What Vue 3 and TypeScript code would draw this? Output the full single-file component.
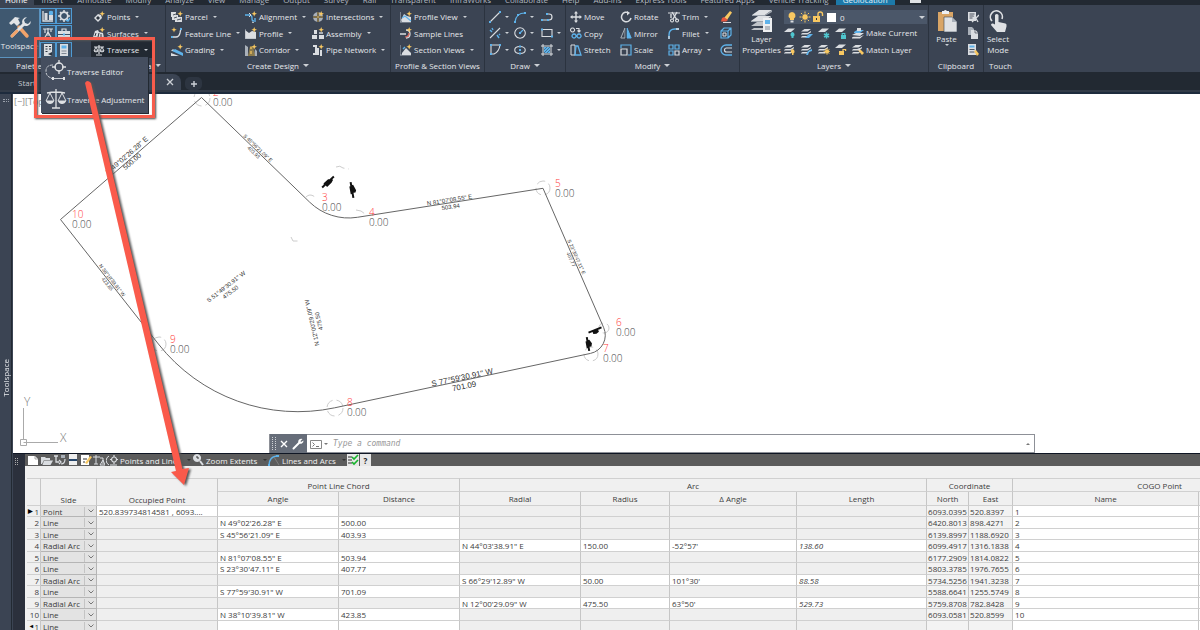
<script setup lang="ts">
import { h, ref } from 'vue'

type Shape = [d: string, fill?: string, stroke?: string, width?: number]

const W = '#dadde1'
const G = '#a9b0b9'
const B = '#5eb2ea'
const Y = '#f8c862'
const K = '#2b3440'
const T = '#4fc6cf'
const spark: Shape = ['M9.2 0l.8 2 2 .8-2 .8-.8 2-.8-2-2-.8 2-.8z', Y]
const sheets: Shape = ['M0 4.500L3.500 2H10L6.500 4.500zM0 7l1.500-1h5L10 4v1.200L6.500 7.500H0zM0 10l1.500-1h5L9 7v1.200L6.500 10.500H0z', W]
const sheet: Shape = ['M0 5L4 1.500h7L7 5z', W]

const icons: Record<string, Shape[]> = {
  points: [['M1 7l4-4 3 1 1 3-4 4z', W], ['M5 5l2 2-2 2-2-2z', K], spark],
  surfaces: [['M0 10l2-6 3-1 1 2 4 1 1 5H1z', W], ['M2 9l1-3M5 10l1-4M8 10V7', 'none', K, 1], spark],
  traverse: [['M1 3h10M6 1v9M3 11h6', 'none', W, 1.2], ['M3 3L1 7h4zM9 3L7 7h4zM1 7q2 2 4 0M7 7q2 2 4 0', 'none', W, 1]],
  parcel: [['M0 1h5v3h2v2h4v5H4V9H1V6H0z', W], ['M2 4l3-1M3 7l3-1M6 9l4-1', 'none', K, .8], spark],
  feature: [['M1 10h4q3 0 4-4l1-5', 'none', W, 1.3], ['M0 9h2v2H0zM9 1h2v2H9z', B], ['M3 0l.7 2 2 .7-2 .7L3 5.500l-.7-2-2-.7 2-.7z', Y]],
  grading: [['M0 7h4l-2-2z', W], ['M1 7l3-2 8 4v3z', B], ['M0 9l8 3H0z', W], spark],
  alignment: [['M0 4h4q3 0 3 3v1q0 2 2 2', 'none', B, 1.3], ['M4 2l2 2-2 2M7 11l2 1', 'none', W, 1], ['M10 7v4', 'none', B, 1.4], spark],
  profile: [['M0 3l4 3 3-2 4 1v7H0z', W], ['M0 2v10h11', 'none', G, 1], spark],
  corridor: [['M0 1l3 2v9H0zM10 5l2 2v5H9z', G], ['M5 2h3l2 10H3z', '#8b7a4b'], ['M6 3v2M6 7v3', 'none', Y, 1.2], spark],
  intersections: [['M6 1a5 5 0 1 0 .1 0z', G], ['M6 1v10M1 6h10', 'none', K, 2], ['M6 1v10M1 6h10', 'none', Y, .8], spark],
  assembly: [['M2 3h3v4H2zM0 8h5v4H0zM7 8h5v4H7z', W], ['M7 5h4v2H7z', G], spark],
  pipe: [['M1 2h3v8H1M6 4v7M9 6v6', 'none', W, 2], spark],
  profileview: [['M0 1v10h11', 'none', G, 1.2], ['M1 9l3-6 3 2 4 1v5H2z', W], ['M2 7l3-2 6 5', 'none', B, 1.2], spark],
  sample: [['M0 7h6M6 3q4 0 4 4t-4 4', 'none', W, 1.3], ['M5 10q4 0 4-4', 'none', '#e26a5f', 1.2], spark],
  sectionview: [['M0 1v10h11', 'none', G, 1], ['M2 9l4-5 5 5v2H2z', W], ['M3 5l2-2', 'none', B, 1.4], spark],
  line: [['M1 11L11 1', 'none', W, 1.1], ['M0 10h2v2H0zM10 0h2v2h-2z', B]],
  arc: [['M1 11Q2 2 11 2', 'none', B, 1.2], ['M0 10h2v2H0zM3 3h2v2H3zM10 1h2v2h-2z', B]],
  polyline: [['M1 9h7q3 0 3-3t-3-3H6', 'none', W, 1.2], ['M0 8h2v2H0zM6 8h2v2H6zM5 2h2v2H5z', B]],
  xline: [['M1 11L11 1', 'none', W, 1.1], ['M1 3l2 2M3 1l1 2M8 8l2 3M10 7l1 1', 'none', B, 1.4]],
  circle: [['M6 .8a5.200 5.200 0 1 0 .1 0z', 'none', W, 1.1], ['M6 6l3-3', 'none', B, 1.2], ['M5 5h2v2H5z', B]],
  rect: [['M1 2.500h10v7H1z', 'none', W, 1.1], ['M0 1.500h2v2H0zM10 8.500h2v2h-2z', B]],
  region: [['M2 1h9q-1 7-6 9H2z', 'none', W, 1.1], ['M1 9h2v2H1zM10 0h2v2h-2zM1 0h2v2H1z', B]],
  ellipse: [['M6 2.500C-1 2.500-1 9.500 6 9.500S13 2.500 6 2.500z', 'none', W, 1.1], ['M5 1.500h2v2H5zM5 5h2v2H5zM5 8.500h2v2H5z', B]],
  hatch: [['M2 0v12M10 0v12M0 2h12M0 10h12', 'none', W, 1], ['M3 3h6v6H3z', B], ['M3 6l3-3M3 9l6-6M6 9l3-3', 'none', K, .5]],
  move: [['M6 0l2 2.500H6.700v2.800h2.800V4L12 6 9.500 8V6.700H6.700v2.800H8L6 12 4 9.500h1.300V6.700H2.500V8L0 6l2.500-2v1.300h2.800V2.500H4z', W]],
  copy: [['M2.500 1a2 2 0 1 0 .1 0z', 'none', W, 1.1], ['M4 7a2 2 0 1 0 .1 0zM9 7a2 2 0 1 0 .1 0z', 'none', B, 1.3], ['M6 1.500h3v3M7.500 3.500L9 5l1.500-1.500', 'none', W, 1.1]],
  stretch: [['M1 1h4v10H1z', 'none', W, 1], ['M5 11h6L8 2H6z', 'none', B, 1.3]],
  rotate: [['M9 2A4.800 4.800 0 1 0 11 7', 'none', W, 1.5], ['M7 0l3 2-3 2.500z', W]],
  mirror: [['M5 1v10H.8z', 'none', G, 1], ['M7 1v10h4.200z', B, B, 1], ['M6 0v12', 'none', K, .8]],
  scale: [['M1 5h6v6H1z', 'none', W, 1.2], ['M1 4V1h10v10H8', 'none', B, 1.2]],
  trim: [['M0 2h12', 'none', W, 1], ['M4 1l5 8M9 1L5 8M3 3v4', 'none', W, 1.4], ['M4 8a1.500 1.500 0 1 0 .1 0zM9 8a1.500 1.500 0 1 0 .1 0z', 'none', W, 1.1]],
  fillet: [['M1 12V8q0-6 6-6h4', 'none', B, 1.4], ['M1 12V9M8 2h3', 'none', W, 1.3]],
  array: [['M1 1h4v4H1zM7 1h4v4H7zM1 7h4v4H1z', 'none', B, 1.2], ['M7 7h4v4H7z', 'none', W, 1.2]],
  erase: [['M4 7L10 0l2 1.500L7 9z', Y], ['M2 7l2-1 4 3-2 1.500H1z', '#e5563e'], ['M3 11.500h8', 'none', W, 1]],
  explode: [['M1 4h7v7H1zM1 4l3-3h7v7L8 11M8 4l3-3', 'none', B, 1.2], ['M3 6h3v3H3z', 'none', W, 1]],
  offset: [['M12 1H6a5 5 0 0 0 0 10h6', 'none', B, 1.3], ['M12 4H6.500a2 2 0 0 0 0 4H12', 'none', W, 1.2]],
  bulb: [['M6 1a3.600 3.600 0 0 0-2 6.500V9h4V7.500A3.600 3.600 0 0 0 6 1z', Y], ['M4.500 9.500h3v2h-3z', W]],
  sun: [['M6 3.200a2.800 2.800 0 1 0 .1 0z', Y], ['M6 .5v2M6 9.500v2M.5 6h2M9.500 6h2M2 2l1.300 1.300M8.700 8.700L10 10M10 2L8.700 3.300M3.300 8.700L2 10', 'none', Y, 1]],
  unlock: [['M1 5h7v6H1z', Y], ['M6 5V3q0-2 2.200-2T10.500 3v2', 'none', Y, 1.4], ['M4 7h1v2H4z', K]],
  layoff: [sheet, ['M8.500 5a2.500 2.500 0 0 1 1 4.500V11H7.500V9.500A2.500 2.500 0 0 1 8.500 5z', T]],
  layiso: [sheets, ['M4 11l4-4h4l-4 4z', B]],
  layfrz: [sheet, ['M8.500 5.500v6M6 7l5 3M11 7l-5 3', 'none', T, 1.5]],
  laylock: [sheet, ['M6 8h5v4H6z', T], ['M7.200 8V6.500h2.600V8', 'none', T, 1.1]],
  laycur: [['M0 8l4-2h8l-4 3zM0 10.500l1.500-.7H8L12 8l-4 3.500H0z', W], ['M2 5l3-2h7L8 6H2z', B], ['M5 1h4v3H5z', W]],
  layon: [sheets, ['M8.500 6a2.500 2.500 0 0 1 1 4.500V12H8v-1.500A2.500 2.500 0 0 1 8.500 6z', Y]],
  layuniso: [sheets, ['M5 12l2-4 4-2v2l-3 1-1 3z', B]],
  laythw: [sheets, ['M9 6.500a2 2 0 1 0 .1 0z', Y], ['M9 5v7M5.500 8.500h7M6.500 6l5 5M11.500 6l-5 5', 'none', Y, .7]],
  layunlk: [sheet, ['M4 8h5v4H4z', Y], ['M8 8V6.500h2.600V8', 'none', Y, 1.2]],
  laymatch: [sheets, ['M6 7l2-1 4 4-2 2z', Y], ['M5 6l3-1v3z', W]],
  cut: [['M1 1h8v9H1z', W], ['M2.500 3h5M2.500 5h5M2.500 7h3', 'none', K, .8], ['M5 11l7-7M7 4l4 7', 'none', W, 1.3]],
  copyclip: [['M1 0h4l2 2v6H1z', G], ['M4 3h4.500L11 5.500V12H4z', W], ['M8 3v3h3', 'none', K, .6]],
  listprop: [['M1 0h8v11H1z', W], ['M2.500 1.500h5v2h-5z', B], ['M2.500 5.500h5M2.500 8h5', 'none', K, .8], ['M7 7l2-1 3 4-2 2z', Y]],
  palette: [['M1 1v10h10', 'none', W, 1.3], ['M2.500 3h3v7h-3z', W], ['M7 5h4v5H7z', W], ['M7 1.500q2-1.500 4 0v3q-2 1-4 0z', B]],
  gear: [['M6 2.200a3.800 3.800 0 1 0 .1 0z', 'none', W, 1.8], ['M6 0v2M6 10v2M0 6h2M10 6h2M2 2l1 1M9 9l1 1M10 2L9 3M3 9l-1 1', 'none', W, 1.5], ['M8 10l2 1 2-3', 'none', B, 1.4]],
  survey: [['M1 2h10M3 2v4M9 2v3M6 1v4M6 5l-4 7M6 5l4 7M4 8h4', 'none', W, 1.2]],
  toolbox: [['M0 4h12v3H0zM0 8h12v3H0z', W], ['M4 4V2h4v2', 'none', W, 1.2], ['M5 6.500h2v2H5z', B]],
  form: [['M2 0h8v12H2z', W], ['M3.500 2.500h2M7 2.500h2M3.500 5h2M7 5h2M3.500 7.500h2', 'none', K, 1.2], ['M6 10l4-2v4z', K]],
  calc: [['M2 0h8v12H2z', W], ['M3.500 1.500h5v3h-5z', B], ['M3.500 7h5M3.500 9.500h5', 'none', '#7f8894', 1]],
  newdoc: [['M0 2h7l3 3v6H0z', '#fff'], ['M7 2v3h3', 'none', '#888', .7]],
  open: [['M0 3h4l1 1h4v2H3l-2 4H0z', W], ['M3 6.500h9L9.500 11H1.500z', W]],
  tree: [['M0 2h4M2 2v6h3M5 6l2 2-2 2', 'none', W, 1.3], ['M7 1h4v3H7z', G], ['M7 10q4 0 4-5', 'none', W, 1.2]],
  save: [['M2 0h8v5H2zM2 7h8v4H2z', '#eee'], ['M2 5h8v2H2z', '#26466b']],
  edit: [['M1 1h8v10H1z', '#fff'], ['M3 5h4M3 8h2', 'none', '#333', 1], ['M5 9l5-7 2 1-5 7z', Y]],
  scaleicon: [['M0 3h7M3 1v9M1 10h4M7 4h3v6M10 6l2 5H7z', 'none', W, 1]],
  trav: [['M3 11A5 5 0 0 1 3 2M4 11h7', 'none', W, 1], ['M8 3a2.500 2.500 0 1 0 .1 0zM8 1v2M8 8v2M4 5.500h2M10 5.500h2', 'none', W, 1.2]],
  zoomext: [['M5 0a4 4 0 1 0 .1 0z', W], ['M5 2v2h2', 'none', '#333', 1], ['M8 7l3 4', 'none', W, 2]],
  arcs: [['M1 12Q1 2 10 2', 'none', B, 1.3], ['M0 10h2v2H0zM8 1h3v2H8z', B], ['M6 3l5 8', 'none', '#888', .8]],
  check: [['M0 0h12v12H0z', '#e7e7e7'], ['M1 3h4M1 6h4M1 9h4', 'none', '#333', 1.2], ['M5 3l2 2 4-4M5 8l2 2 4-4', 'none', '#16b42b', 1.6]],
}

const Icon = (p: { name: string }) =>
  h('svg', { viewBox: '0 0 12 12', width: 12, height: 12, 'aria-hidden': 'true' },
    icons[p.name].map(([d, fill = 'none', stroke = 'none', width = 1]) =>
      h('path', { d, fill, stroke, 'stroke-width': width })))
Icon.props = ['name']

const tabs = ['Home', 'Insert', 'Annotate', 'Modify', 'Analyze', 'View', 'Manage', 'Output', 'Survey', 'Rail', 'Transparent',
  'InfraWorks', 'Collaborate', 'Help', 'Add-ins', 'Express Tools', 'Featured Apps', 'Vehicle Tracking', 'Geolocation']

interface Tool { icon: string; label: string; drop?: boolean }
const t = (icon: string, label: string, drop = true): Tool => ({ icon, label, drop })

const paletteTools = ['palette', 'gear', 'survey', 'toolbox', 'form', 'calc']
const ground = [t('points', 'Points'), t('surfaces', 'Surfaces'), t('traverse', 'Traverse')]
const design = [
  t('parcel', 'Parcel'), t('alignment', 'Alignment'), t('intersections', 'Intersections'),
  t('feature', 'Feature Line'), t('profile', 'Profile'), t('assembly', 'Assembly'),
  t('grading', 'Grading'), t('corridor', 'Corridor'), t('pipe', 'Pipe Network'),
]
const views = [t('profileview', 'Profile View'), t('sample', 'Sample Lines', false), t('sectionview', 'Section Views')]
const draw = [
  t('line', 'Line'), t('arc', 'Arc'), t('polyline', 'Polyline', false),
  t('xline', 'Construction'), t('circle', 'Circle'), t('rect', 'Rectangle'),
  t('region', 'Region'), t('ellipse', 'Ellipse'), t('hatch', 'Hatch'),
]
const modify = [
  t('move', 'Move', false), t('rotate', 'Rotate', false), t('trim', 'Trim'), t('erase', '', false),
  t('copy', 'Copy', false), t('mirror', 'Mirror', false), t('fillet', 'Fillet'), t('explode', '', false),
  t('stretch', 'Stretch', false), t('scale', 'Scale', false), t('array', 'Array'), t('offset', '', false),
]
const layerTools = ['layoff', 'layiso', 'layfrz', 'laylock', 'laycur', 'layon', 'layuniso', 'laythw', 'layunlk', 'laymatch']
const layerLabels: Record<string, string> = { laycur: 'Make Current', laymatch: 'Match Layer' }

interface PointMark { n: string; x: number; y: number }
const marks: PointMark[] = [
  { n: '2', x: 213, y: 96 }, { n: '3', x: 322, y: 201 }, { n: '4', x: 369, y: 216 },
  { n: '5', x: 555, y: 187 }, { n: '6', x: 616, y: 326 }, { n: '7', x: 603, y: 352 },
  { n: '8', x: 347, y: 406 }, { n: '9', x: 170, y: 343 }, { n: '10', x: 72, y: 218 },
]
interface Course { x: number; y: number; a: number; s: number; bearing: string; length: string }
const courses: Course[] = [
  { x: 129, y: 158, a: -41, s: 7, bearing: 'N 49°02\'26.28" E', length: '500.00' },
  { x: 256, y: 150, a: 44, s: 5, bearing: 'S 45°56\'21.09" E', length: '403.93' },
  { x: 450, y: 203, a: -9, s: 6, bearing: 'N 81°07\'08.55" E', length: '503.94' },
  { x: 574, y: 258, a: 66, s: 5, bearing: 'S 23°30\'47.11" E', length: '407.77' },
  { x: 463, y: 381, a: -12, s: 8, bearing: 'S 77°59\'30.91" W', length: '701.09' },
  { x: 110, y: 282, a: 52, s: 5, bearing: 'N 38°10\'39.81" W', length: '423.85' },
  { x: 228, y: 289, a: -38, s: 6, bearing: 'S 51°49\'30.91" W', length: '475.50' },
  { x: 315, y: 322, a: -103, s: 6, bearing: 'N 12°00\'29.09" W', length: '475.50' },
]

interface Row {
  side: string; occupied?: string; angle?: string; distance?: string
  radial?: string; radius?: string; delta?: string; length?: string
  north?: string; east?: string; name?: string
}
const line = (angle: string, distance: string, north: string, east: string, name: string): Row =>
  ({ side: 'Line', angle, distance, north, east, name })
const arc = (radial: string, radius: string, delta: string, length: string, north: string, east: string, name: string): Row =>
  ({ side: 'Radial Arc', radial, radius, delta, length, north, east, name })
const rows = ref<Row[]>([
  { side: 'Point', occupied: '520.839734814581 , 6093....', angle: '', north: '6093.0395', east: '520.8397', name: '1' },
  line('N 49°02\'26.28" E', '500.00', '6420.8013', '898.4271', '2'),
  line('S 45°56\'21.09" E', '403.93', '6139.8997', '1188.6920', '3'),
  arc('N 44°03\'38.91" E', '150.00', '-52°57\'', '138.60', '6099.4917', '1316.1838', '4'),
  line('N 81°07\'08.55" E', '503.94', '6177.2909', '1814.0822', '5'),
  line('S 23°30\'47.11" E', '407.77', '5803.3785', '1976.7655', '6'),
  arc('S 66°29\'12.89" W', '50.00', '101°30\'', '88.58', '5734.5256', '1941.3238', '7'),
  line('S 77°59\'30.91" W', '701.09', '5588.6641', '1255.5749', '8'),
  arc('N 12°00\'29.09" W', '475.50', '63°50\'', '529.73', '5759.8708', '782.8428', '9'),
  line('N 38°10\'39.81" W', '423.85', '6093.0581', '520.8599', '10'),
  { side: 'Line', angle: '', distance: '' },
])
const fields = ['occupied', 'angle', 'distance', 'radial', 'radius', 'delta', 'length'] as const
const rowMark = (i: number) => (i === 0 ? '▶' : i === 10 ? '◂' : '')
const rowNumber = (i: number) => (i === 10 ? '1' : String(i + 1))
const command = ref('')
const editTools = ['newdoc', 'open', 'tree', 'save', 'edit', 'scaleicon', 'trav']
</script>

<template>
  <div class="app">
    <nav class="tabs">
      <a v-for="name in tabs" :key="name" href="#" :class="{ home: name === 'Home', geo: name === 'Geolocation' }">{{ name }}</a>
      <span class="tab-box"></span>
    </nav>

    <div class="ribbon">
      <section class="panel p-palettes">
        <div class="palettes">
          <button class="toolspace">
            <svg viewBox="0 0 24 24" width="24" height="24" aria-hidden="true">
              <path d="M11 12l8 9" stroke="#f1a36a" stroke-width="3.500" stroke-linecap="round" />
              <path d="M1 8l6-6 5 1-2 1 2 4-3 3-3-3-3 2z" fill="#e2e4e7" />
              <path d="M4 21L16 9" stroke="#e2e4e7" stroke-width="3" stroke-linecap="round" />
              <path d="M4 21l5-5" stroke="#f1a36a" stroke-width="3" stroke-linecap="round" />
              <path d="M19 2a5 5 0 0 0-4 8 5 5 0 0 0 8-4l-3 3-3-1-1-3z" fill="#e2e4e7" />
            </svg>
            <span>Toolspace</span>
          </button>
          <button v-for="name in paletteTools" :key="name" class="pal" :aria-label="name"><Icon :name="name" /></button>
        </div>
        <button class="title">Palettes <i class="caret wide"></i></button>
      </section>

      <section class="panel p-ground">
        <div class="tools one">
          <button v-for="x in ground" :key="x.label" class="tool" :class="{ open: x.label === 'Traverse' }">
            <Icon :name="x.icon" /><span>{{ x.label }}</span><i class="caret"></i>
          </button>
        </div>
        <button class="title">Create Ground Data <i class="caret wide"></i></button>
      </section>

      <section class="panel p-design">
        <div class="tools">
          <button v-for="x in design" :key="x.label" class="tool">
            <Icon :name="x.icon" /><span>{{ x.label }}</span><i class="caret"></i>
          </button>
        </div>
        <button class="title">Create Design <i class="caret wide"></i></button>
      </section>

      <section class="panel p-views">
        <div class="tools one">
          <button v-for="x in views" :key="x.label" class="tool">
            <Icon :name="x.icon" /><span>{{ x.label }}</span><i v-if="x.drop" class="caret"></i>
          </button>
        </div>
        <div class="title">Profile &amp; Section Views</div>
      </section>

      <section class="panel p-draw">
        <div class="tools">
          <button v-for="x in draw" :key="x.label" class="tool" :aria-label="x.label">
            <Icon :name="x.icon" /><i v-if="x.drop" class="caret"></i>
          </button>
        </div>
        <button class="title">Draw <i class="caret wide"></i></button>
      </section>

      <section class="panel p-modify">
        <div class="tools">
          <button v-for="x in modify" :key="x.icon" class="tool" :aria-label="x.label || x.icon">
            <Icon :name="x.icon" /><span v-if="x.label">{{ x.label }}</span><i v-if="x.drop" class="caret"></i>
          </button>
        </div>
        <button class="title">Modify <i class="caret wide"></i></button>
      </section>

      <section class="panel p-layers">
        <div class="layers">
          <button class="big">
            <svg viewBox="0 0 24 24" width="24" height="24" aria-hidden="true">
              <path d="M1 17l6-4h14l-6 4zM1 21l3-2h11l5-3-5 5z" fill="#bfc3c8" />
              <path d="M1 12l7-5h13l-6 5zM2 6l7-5h13l-7 5z" fill="#dfe1e4" />
              <path d="M1 12h14l6-5v2l-6 4H1zM2 6h13l7-5v2l-7 4H2z" fill="#9ea5ae" />
              <path d="M13 9h9v14h-9z" fill="#eef0f2" />
              <path d="M15 11h5v4h-5z" fill="#5eb2ea" />
              <path d="M15 18h5M15 20h5" stroke="#7f8894" />
            </svg>
            <span>Layer</span><span>Properties</span>
          </button>
          <div class="layer-side">
            <button class="layer-combo" aria-label="Current layer">
              <Icon name="bulb" /><Icon name="sun" /><Icon name="unlock" /><b class="swatch"></b><span>0</span><i class="caret wide"></i>
            </button>
            <div class="layer-grid">
              <button v-for="name in layerTools" :key="name" class="tool" :aria-label="layerLabels[name] || name">
                <Icon :name="name" /><span v-if="layerLabels[name]">{{ layerLabels[name] }}</span>
              </button>
            </div>
          </div>
        </div>
        <button class="title">Layers <i class="caret wide"></i></button>
      </section>

      <section class="panel p-clip">
        <div class="clip">
          <button class="big">
            <svg viewBox="0 0 24 24" width="24" height="24" aria-hidden="true">
              <path d="M3 3h15v19H3z" fill="#d9a566" />
              <path d="M7 2h2q1-2 3 0h2v3H7z" fill="#eef0f2" />
              <path d="M9 8h8l5 5v10H9z" fill="#dfe1e4" stroke="#3b4453" stroke-width=".6" />
              <path d="M17 8v5h5z" fill="#a9b0b9" />
            </svg>
            <span>Paste</span><i class="caret"></i>
          </button>
          <div class="clip-side">
            <button v-for="name in ['cut', 'copyclip', 'listprop']" :key="name" class="tool" :aria-label="name"><Icon :name="name" /></button>
          </div>
        </div>
        <div class="title">Clipboard</div>
      </section>

      <section class="panel p-touch">
        <button class="big">
          <svg viewBox="0 0 24 24" width="24" height="24" aria-hidden="true">
            <path d="M6 12A6 6 0 1 1 16 10" fill="none" stroke="#dfe1e4" stroke-width="1.600" />
            <path d="M9 6q1.800-2 3.500 0v7l7 1.500q1.500.5 1 3L19 23h-8l-6-7q0-2 2-1.500l2 1z" fill="#dfe1e4" />
          </svg>
          <span>Select</span><span>Mode</span>
        </button>
        <div class="title">Touch</div>
      </section>
    </div>

    <div class="files">
      <button class="start">Start</button>
      <div class="file"><button aria-label="Close drawing"><svg viewBox="0 0 8 8" width="8" height="8"><path d="M1 1l6 6M7 1L1 7" stroke="#ccd0d6" stroke-width="1.300" /></svg></button></div>
      <button class="plus" aria-label="New drawing"><svg viewBox="0 0 8 8" width="8" height="8"><path d="M4 1v6M1 4h6" stroke="#ccd0d6" stroke-width="1.400" /></svg></button>
    </div>

    <div class="work">
      <aside class="side"><i class="grip"></i><span>Toolspace</span></aside>
      <main>
        <div class="canvas">
          <svg class="plan" viewBox="13 94 1187 359" preserveAspectRatio="xMinYMin slice">
            <text x="14" y="105" class="vp">[−][Top]</text>
            <g class="ring">
              <circle cx="202" cy="98" r="8" /><circle cx="543" cy="188" r="7" /><circle cx="604" cy="328" r="5" />
              <circle cx="591" cy="354" r="7" /><circle cx="335" cy="408" r="8" /><circle cx="159" cy="344" r="7" />
              <path d="M336 167q4-2 7 1l6 1M306 197q4-4 9 0M356 210l5 1 4 3M291 237l2 4 8 0" />
            </g>
            <path class="lot" d="M60.500 219.500L201.500 97.500 309.700 202.200A56 56 0 0 0 357.300 217.300L543 188.300 603.700 327.700A18.600 18.600 0 0 1 590.500 353.400L334.700 407.800A177.400 177.400 0 0 1 158.400 344Z" />
            <g class="blob">
              <path transform="translate(328 182) rotate(-43)" d="M-8-1H-5L-4-2H2L3-1H8V1H5V2L2 3H-4V1H-8Z" />
              <path transform="translate(352 190) rotate(80)" d="M-8-1H-5V-2L1-4 3-3V-1H8V1H4V2H-4V1H-8Z" />
              <path transform="translate(595 330) rotate(-22)" d="M-7-1H7V1H3V3L0 4-3 3V1H-7Z" />
              <path transform="translate(588 344) rotate(80)" d="M-7-1H-4V-2L0-4 3-3V-1H7V1H4V2H-3V1H-7Z" />
            </g>
            <g v-for="m in marks" :key="m.n">
              <text :x="m.x" :y="m.y" class="num">{{ m.n }}</text>
              <text :x="m.x" :y="m.y + 10" class="elev">0.00</text>
            </g>
            <g v-for="c in courses" :key="c.bearing" :transform="`translate(${c.x} ${c.y}) rotate(${c.a})`" :font-size="c.s" class="course">
              <text y="-1">{{ c.bearing }}</text>
              <text :y="c.s">{{ c.length }}</text>
            </g>
            <g class="ucs">
              <path d="M23.500 408V439M20.500 439.500h6v6h-6zM23.500 442.500H58" />
              <text x="24" y="406">Y</text>
              <text x="60" y="442">X</text>
            </g>
          </svg>
          <div class="command">
            <div class="command-grip">
              <i class="dots"></i>
              <svg viewBox="0 0 8 8" width="8" height="8"><path d="M1 1l6 6M7 1L1 7" stroke="#fff" stroke-width="1.400" /></svg>
              <svg viewBox="0 0 12 12" width="12" height="12"><path d="M1.500 10.500L7 5" stroke="#fff" stroke-width="2" stroke-linecap="round" /><path d="M10.500 1L8.500 3 9 4 11.500 2.500a3 3 0 0 1-5 2.500A3 3 0 0 1 10.500 1z" fill="#fff" /></svg>
            </div>
            <svg viewBox="0 0 12 10" width="12" height="10"><path d="M.5 1.500h11v8H.5z" fill="#fff" stroke="#888" /><path d="M2.500 3.500l2 2-2 2M6 7.500h3" fill="none" stroke="#777" /></svg>
            <i class="caret grey"></i>
            <input v-model="command" aria-label="Command" placeholder="Type a command" />
            <i class="caret up"></i>
          </div>
        </div>

        <div class="vista">
          <div class="vista-side"><i class="grip"></i></div>
          <div class="vista-main">
            <div class="bar">
              <button v-for="name in editTools" :key="name" :aria-label="name"><Icon :name="name" /></button>
              <button class="named first">Points and Lines<i class="caret dark"></i></button>
              <button class="named ext"><Icon name="zoomext" />Zoom Extents<i class="caret dark"></i></button>
              <button class="named arcs"><Icon name="arcs" />Lines and Arcs<i class="caret dark"></i></button>
              <button aria-label="Check"><Icon name="check" /></button>
              <button class="help">?</button>
            </div>
            <table>
              <colgroup>
                <col class="c14" /><col class="c56" /><col class="c121" /><col class="c121" /><col class="c121" /><col class="c121" />
                <col class="c89" /><col class="c127" /><col class="c130" /><col class="c42" /><col class="c44" /><col class="c186" /><col class="c108" />
              </colgroup>
              <thead>
                <tr>
                  <th rowspan="2"></th><th rowspan="2" class="low">Side</th><th rowspan="2" class="low">Occupied Point</th>
                  <th colspan="2">Point Line Chord</th><th colspan="4">Arc</th><th colspan="2">Coordinate</th><th colspan="2">COGO Point</th>
                </tr>
                <tr>
                  <th>Angle</th><th>Distance</th><th>Radial</th><th>Radius</th><th>Δ Angle</th><th>Length</th>
                  <th>North</th><th>East</th><th>Name</th><th></th>
                </tr>
              </thead>
              <tbody>
                <tr v-for="(r, i) in rows" :key="i">
                  <td class="rownum"><div><b>{{ rowMark(i) }}</b>{{ rowNumber(i) }}</div></td>
                  <td class="side-cell">
                    <div>
                      <select v-model="r.side" :aria-label="`Side of row ${i + 1}`">
                        <option>Point</option><option>Line</option><option>Radial Arc</option>
                      </select>
                      <svg viewBox="0 0 6 4" width="6" height="4"><path d="M.5.5L3 3 5.500.5" fill="none" stroke="#777" /></svg>
                    </div>
                  </td>
                  <td v-for="f in fields" :key="f" :class="{ on: r[f] !== undefined, it: f === 'length' }">{{ r[f] }}</td>
                  <td class="co">{{ r.north }}</td>
                  <td class="co">{{ r.east }}</td>
                  <td class="on">{{ r.name }}</td>
                  <td class="on"></td>
                </tr>
              </tbody>
            </table>
          </div>
        </div>
      </main>
    </div>

    <div class="menu">
      <button>
        <svg viewBox="0 0 22 22" width="22" height="22" aria-hidden="true">
          <path d="M8 5Q1 5 1 11t6 7" fill="none" stroke="#c9cdd3" stroke-dasharray="3 1" />
          <path d="M6 18.500h14" stroke="#c9cdd3" /><path d="M7 17h2v3H7zM18 17h2v3h-2z" fill="#dfe1e4" />
          <circle cx="14" cy="7" r="4" fill="none" stroke="#dfe1e4" stroke-width="1.500" />
          <path d="M14 0v4M14 10v4M7 7h4M17 7h4" stroke="#dfe1e4" stroke-width="1.300" />
        </svg>
        Traverse Editor
      </button>
      <button>
        <svg viewBox="0 0 22 22" width="22" height="22" aria-hidden="true">
          <path d="M2 5q9-2 18 0M11 1v19M7 20h8" fill="none" stroke="#dfe1e4" stroke-width="1.300" />
          <path d="M5 5l-4 8h8zM17 5l-4 8h8z" fill="none" stroke="#dfe1e4" />
          <path d="M1 13h8q-1 3-4 3t-4-3zM13 13h8q-1 3-4 3t-4-3z" fill="#dfe1e4" />
        </svg>
        Traverse Adjustment
      </button>
    </div>

    <div class="callout"></div>
    <svg class="arrow" viewBox="0 0 120 420" width="120" height="420" aria-hidden="true">
      <path d="M11 10Q13 6 17 10L108.500 396 115 395 110 412 97 399 102 398Z" fill="#fa5a4b" />
    </svg>
  </div>
</template>

<style>
html, body { overflow: hidden; background: #3b4453; }
</style>

<style scoped>
.app { position: relative; display: flex; flex-direction: column; height: 100vh; overflow: hidden; background: #3b4453; color: #e6e8eb; font: 500 8px/11px "Open Sans", "Noto Sans", sans-serif; }
button { display: flex; align-items: center; margin: 0; padding: 0; border: 0; background: none; color: inherit; font: inherit; white-space: nowrap; }
svg { flex: none; }
.caret { flex: none; border: 2px solid transparent; border-top: 2px solid #ccd0d5; border-bottom: 0; }
.caret.wide { border-width: 3px 3px 0; margin-left: 4px; }
.caret.dark { border-top-color: #333; margin-left: 4px; }
.caret.grey { border-top-color: #777; }
.caret.up { border-top: 0; border-bottom: 2px solid #777; }

.tabs { display: flex; flex: none; align-items: flex-end; gap: 14px; height: 5px; padding-left: 5px; overflow: hidden; background: #222932; color: #b4bac2; font-weight: 400; }
.tabs a { color: inherit; text-decoration: none; white-space: nowrap; }
.tabs .home { color: #fff; background: #3b4453; box-shadow: -5px 0 #3b4453, 6px 0 #3b4453; }
.tabs .geo { color: #e8f3fa; background: #1c79a9; box-shadow: -7px 0 #1c79a9, 7px 0 #1c79a9; }
.tab-box { width: 11px; height: 3px; margin: 0 0 2px 8px; background: #dfe1e4; }

.ribbon { display: flex; flex: none; height: 67px; }
.panel { display: flex; flex: none; flex-direction: column; padding-top: 3px; box-sizing: border-box; border-right: 1px solid #2b333f; }
.title { display: flex; align-items: center; justify-content: center; height: 13px; margin-top: auto; white-space: nowrap; }
.tools { display: grid; grid-auto-rows: 17px 16px 17px; }
.tool { gap: 2px; }
.tool .caret { margin-left: 3px; }
.p-palettes { width: 73px; border-right-color: #3b4453; }
.p-ground { width: 93px; }
.p-design { width: 225px; }
.p-views { width: 94px; }
.p-draw { width: 81px; }
.p-modify { width: 174px; }
.p-layers { width: 189px; }
.p-clip { width: 55px; }
.p-touch { flex: 1; align-items: flex-start; padding-left: 3px; border: 0; }
.p-touch .title { padding-left: 2px; }
.p-ground .tools { justify-items: start; padding-left: 18px; }
.p-ground .tool { padding: 0 4px 0 2px; }
.p-ground .open { background: #222932; }
.p-design .tools { grid-template-columns: 74px 67px auto; padding-left: 5px; }
.p-views .tools { padding-left: 9px; }
.p-draw .tools { grid-template-columns: 25px 27px 24px; padding-left: 4px; }
.p-draw .tool { gap: 1px; }
.p-modify .tools { grid-template-columns: 50px 48px 52px auto; padding-left: 4px; }

.palettes { display: grid; grid-template: repeat(3, 16px) / 40px 16px 16px; row-gap: 1px; }
.toolspace { grid-row: 1 / 4; flex-direction: column; justify-content: center; gap: 1px; border: 1px solid #5b93bf; border-left: 0; background: #3f5870; }
.pal { justify-content: center; border: 1px solid #4f9bd4; background: #3c5269; }

.layers, .clip { display: flex; }
.big { flex-direction: column; padding-top: 1px; line-height: 11px; }
.layers .big { width: 43px; }
.layer-side { flex: 1; padding: 2px 1px 0 1px; }
.layer-combo { width: 100%; height: 14px; gap: 1px; padding: 0 2px; background: #4b5769; }
.layer-combo .swatch { width: 9px; height: 9px; margin: 0 3px 0 2px; background: #fff; }
.layer-combo .caret { margin-left: auto; }
.layer-grid { display: grid; grid-template: 17px 16px / repeat(4, 17px) auto; }
.clip .big { width: 35px; }
.clip-side { display: grid; grid-auto-rows: 17px 16px 17px; padding-left: 3px; }
.p-touch .big { width: 22px; }

.files { display: flex; flex: none; align-items: stretch; height: 20px; padding-top: 2px; box-sizing: border-box; border-bottom: 2px solid #323b48; background: #222932; box-shadow: 0 2px #1d2b3d; margin-bottom: 2px; z-index: 1; color: #c3c8cf; }
.files button { padding: 0; }
.files .start { width: 52px; padding-left: 18px; background: #2d3541; border-radius: 0 6px 0 0; }
.file { display: flex; align-items: center; justify-content: flex-end; width: 129px; box-sizing: border-box; padding-right: 7px; background: #3b4453; border-radius: 6px 8px 0 0; }
.files .plus { width: 17px; margin: 3px 0 0 4px; justify-content: center; border-radius: 5px; background: #2d3541; }

.work { display: flex; flex: 1; min-height: 0; }
.side { display: flex; flex: none; flex-direction: column; align-items: center; justify-content: space-between; width: 12px; padding: 5px 0 233px; box-sizing: border-box; border-right: 1px solid #222932; margin-right: 1px; }
.side span { writing-mode: vertical-rl; transform: rotate(180deg); }
.grip { width: 6px; height: 1px; border-top: 1px dotted #9aa1ab; border-bottom: 1px dotted #9aa1ab; }
main { display: flex; flex: 1; flex-direction: column; min-width: 0; }
.canvas { position: relative; flex: 1; min-height: 0; overflow: hidden; background: #fff; }
.plan { display: block; width: 100%; height: 100%; }
.lot { fill: none; stroke: #666; stroke-width: 1; }
.ring { fill: none; stroke: #ccc; stroke-dasharray: 9 4; }
.blob { fill: #111; }
.num { fill: #ff3a3a; font-size: 10px; font-weight: 300; }
.elev { fill: #444; font-size: 10px; font-weight: 300; }
.vp { fill: #8a8a8a; font-size: 9px; font-weight: 400; }
.course { fill: #333; font-family: "Liberation Sans", Arial, sans-serif; font-weight: 400; text-anchor: middle; }
.ucs path { fill: none; stroke: #aaa; }
.ucs text { fill: #777; font-size: 12px; font-weight: 300; }

.command { position: absolute; right: 165px; bottom: 0; left: 256px; display: flex; align-items: center; gap: 2px; height: 17px; padding-right: 4px; border: 1px solid #8d9097; background: #fff; }
.command-grip { display: flex; align-items: center; gap: 4px; height: 19px; width: 35px; margin-right: 1px; padding-left: 2px; background: #666d79; }
.dots { width: 4px; height: 13px; border-left: 1px dotted #cfd2d7; border-right: 1px dotted #cfd2d7; box-sizing: border-box; }
.command input { flex: 1; min-width: 0; padding: 0 2px 0 3px; border: 0; outline: 0; background: none; font: italic 8px/12px "DejaVu Sans Mono", "Liberation Mono", monospace; }
.command input::placeholder { color: #999; opacity: 1; }

.vista { display: flex; flex: none; height: 177px; overflow: hidden; background: #f0f0f0; }
.vista-side { flex: none; width: 12px; padding: 4px 0 0 2px; box-sizing: border-box; border-top: 1px solid #0f1624; background: #2b303c; }
.vista-side .grip { display: block; width: 1px; height: 7px; border: 0; border-left: 1px dotted #aaa; border-right: 1px dotted #aaa; }
.vista-main { flex: 1; min-width: 0; overflow: hidden; }
.bar { display: flex; align-items: center; height: 12px; padding-left: 2px; border-top: 1px solid #0f1624; background: #5c5c5c; color: #f2f2f2; }
.bar > button { flex: none; justify-content: center; width: 13px; height: 12px; }
.bar .named { justify-content: flex-start; gap: 2px; }
.bar .first { width: 74px; padding-left: 2px; }
.bar .ext { width: 76px; }
.bar .arcs { width: 78px; }
.bar .help { width: 11px; margin-left: 1px; background: #e7e7e7; color: #222; font-weight: 700; }

table { width: 1280px; margin: 12px 0 0 2px; table-layout: fixed; border-collapse: separate; border-spacing: 0; color: #3c3c3c; font-weight: 400; line-height: 9px; }
.c14 { width: 14px; } .c56 { width: 56px; } .c121 { width: 121px; } .c89 { width: 89px; } .c127 { width: 127px; }
.c130 { width: 130px; } .c42 { width: 42px; } .c44 { width: 44px; } .c186 { width: 186px; } .c108 { width: 108px; }
th, td { box-sizing: border-box; padding: 0; border-right: 1px solid #c6c6c6; border-bottom: 1px solid #d0d0d0; white-space: nowrap; }
th { height: 14px; font-weight: 400; text-align: center; }
thead tr:first-child th { border-top: 1px solid #d0d0d0; }
th.low { vertical-align: bottom; padding-bottom: 1px; }
td { height: 11px; padding-left: 2px; background: #efefef; }
tr:nth-child(even) td { height: 12px; }
td.on { background: #fff; }
td.co { padding-left: 1px; background: #f3f3f3; }
td.it { font-style: italic; }
td.rownum { padding: 0; text-align: right; background: #f0f0f0; }
.rownum div { display: flex; align-items: center; justify-content: flex-end; height: 9px; padding-right: 1px; }
.rownum b { margin-right: 1px; color: #000; font-size: 6px; line-height: 8px; }
td.side-cell { padding: 0; border-color: #b5b5b5; background: #e3e3e3; }
.side-cell div { display: flex; align-items: center; height: 9px; overflow: hidden; }
.side-cell select { flex: 1; min-width: 0; height: 11px; margin: 0; padding: 0 0 0 2px; border: 0; border-right: 1px solid #c4c4c4; background: none; color: inherit; font: inherit; appearance: none; }
.side-cell svg { margin: 0 2px 0 3px; }

.menu { position: absolute; top: 57px; left: 41px; z-index: 2; display: flex; flex-direction: column; background: #454e5f; box-shadow: 1px 1px 0 #222932; }
.menu button { height: 28px; padding: 0 4px; }
.callout { position: absolute; top: 37px; left: 34px; z-index: 3; width: 115px; height: 75px; border: 3px solid #f75c4c; box-shadow: 1px 1px 2px #444, inset 1px 1px 2px #555; }
.arrow { position: absolute; top: 73px; left: 74px; z-index: 4; filter: drop-shadow(2px 1px 1px #555); }
</style>
